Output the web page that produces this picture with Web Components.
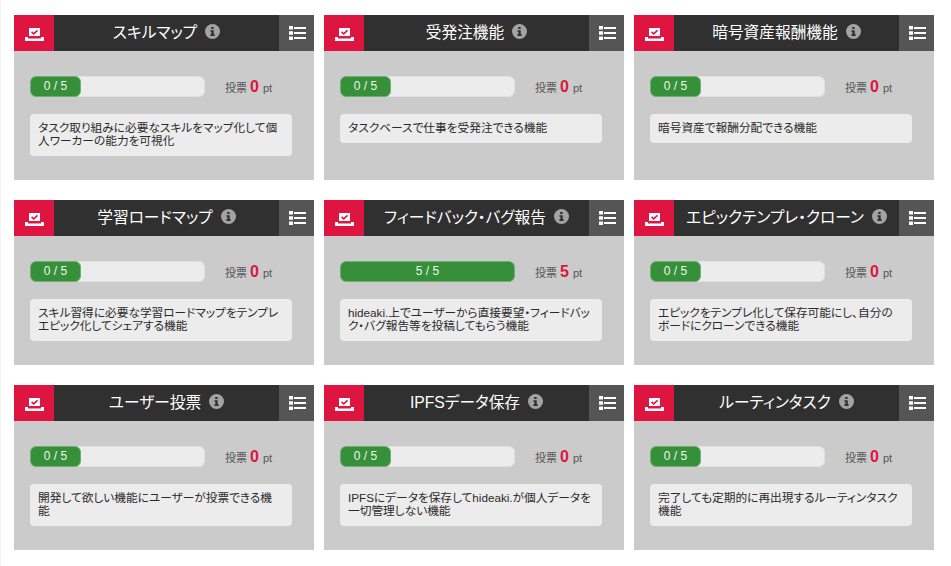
<!DOCTYPE html>
<html lang="ja">
<head>
<meta charset="utf-8">
<title>機能投票</title>
<style>
  html, body { margin: 0; background: #fff; }
  body { font-family: "Liberation Sans", "Noto Sans CJK JP", sans-serif; font-feature-settings: "palt"; }
</style>
</head>
<body>
<feature-board>
  <feature-card name="スキルマップ" votes="0">タスク取り組みに必要なスキルをマップ化して個人ワーカーの能力を可視化</feature-card>
  <feature-card name="受発注機能" votes="0">タスクベースで仕事を受発注できる機能</feature-card>
  <feature-card name="暗号資産報酬機能" votes="0">暗号資産で報酬分配できる機能</feature-card>
  <feature-card name="学習ロードマップ" votes="0">スキル習得に必要な学習ロードマップをテンプレエピック化してシェアする機能</feature-card>
  <feature-card name="フィードバック・バグ報告" votes="5">hideaki.上でユーザーから直接要望・フィードバック・バグ報告等を投稿してもらう機能</feature-card>
  <feature-card name="エピックテンプレ・クローン" votes="0">エピックをテンプレ化して保存可能にし、自分のボードにクローンできる機能</feature-card>
  <feature-card name="ユーザー投票" votes="0">開発して欲しい機能にユーザーが投票できる機能</feature-card>
  <feature-card name="IPFSデータ保存" votes="0">IPFSにデータを保存してhideaki.が個人データを一切管理しない機能</feature-card>
  <feature-card name="ルーティンタスク" votes="0">完了しても定期的に再出現するルーティンタスク機能</feature-card>
</feature-board>

<script>
class FeatureBoard extends HTMLElement {
  constructor() {
    super();
    this.attachShadow({ mode: 'open' }).innerHTML = `
      <style>
        :host {
          display: grid;
          grid-template-columns: repeat(3, 300px);
          grid-auto-rows: 165px;
          column-gap: 10px;
          row-gap: 20px;
          padding: 15px 0 16px 13px;
          min-height: 535px;
          border-left: 1px solid #f3f3f3;
          box-sizing: border-box;
        }
      </style>
      <slot></slot>`;
  }
}

class FeatureCard extends HTMLElement {
  connectedCallback() {
    const votes = Number(this.getAttribute('votes'));
    const name = this.getAttribute('name');
    const width = votes === 0 ? 51 : 175;
    this.attachShadow({ mode: 'open' }).innerHTML = `
      <style>
        :host { display: block; background: #cbcbcb; }
        .head { display: flex; height: 36px; background: #303030; color: #fff; }
        .vote { width: 40px; background: #dd1540; display: flex; align-items: center; justify-content: center; }
        .title { flex: 1; display: flex; align-items: center; justify-content: center; gap: 8px; font-size: 15.7px; }
        .title span { position: relative; top: -2px; }
        .list { width: 35px; background: #555; display: flex; align-items: center; justify-content: center; padding-left: 1px; box-sizing: border-box; }
        .body { padding: 25px 22px 0 16px; }
        .stat { display: flex; align-items: center; }
        .bar { width: 175px; height: 21px; box-sizing: border-box; border-radius: 6px; background: #ececec; border: 1px solid #e0e0e0; flex: none; }
        .fill { width: ${width}px; height: 21px; margin: -1px; box-sizing: border-box; border-radius: 6px; border: 1px solid #6fb072; background: #36903a; color: #eef6ee; font-size: 12px; line-height: 18px; text-align: center; }
        .score { margin-left: 20px; font-size: 11px; color: #555; display: flex; align-items: baseline; gap: 4px; }
        .score b { font-size: 16px; color: #dd1540; margin-left: -1px; }
        .desc { margin-top: 17px; background: #ececec; border-radius: 4px; padding: 7px 10px 9px 8px; font-size: 11.7px; line-height: 13px; color: #2a2a2a; }
        svg { display: block; }
      </style>
      <div class="head">
        <div class="vote">
          <svg width="19" height="13" viewBox="0 0 19 13" fill="#fff" style="margin-top:3px"><path d="M4 0h11v8H4zM0 9h3v1.5h13V9h3v4H0z"/><path d="M6.6 3.8l2.1 2 3.8-3.4" fill="none" stroke="#dd1540" stroke-width="1.6"/></svg>
        </div>
        <div class="title">
          <span>${name}</span>
          <svg width="15" height="15" viewBox="0 0 16 16" style="margin-top:-3px"><circle cx="8" cy="8" r="8" fill="#a3a3a3"/><path d="M6.6 3.2h2.6v2.2H6.6zM5.8 6.6h3.5v4.4h1v1.7H5.8V11h1V8.3h-1z" fill="#303030"/></svg>
        </div>
        <div class="list">
          <svg width="17" height="14" viewBox="0 0 17 14" fill="#fff"><path d="M0 0h4v3.5H0zM0 5.2h4v3.5H0zM0 10.5h4V14H0zM5 1h12v2H5zM5 6h12v2H5zM5 11h12v2H5z"/></svg>
        </div>
      </div>
      <div class="body">
        <div class="stat">
          <div class="bar"><div class="fill">${votes} / 5</div></div>
          <div class="score"><span>投票</span><b>${votes}</b><span>pt</span></div>
        </div>
        <div class="desc"><slot></slot></div>
      </div>`;
  }
}

customElements.define('feature-board', FeatureBoard);
customElements.define('feature-card', FeatureCard);
</script>
</body>
</html>
